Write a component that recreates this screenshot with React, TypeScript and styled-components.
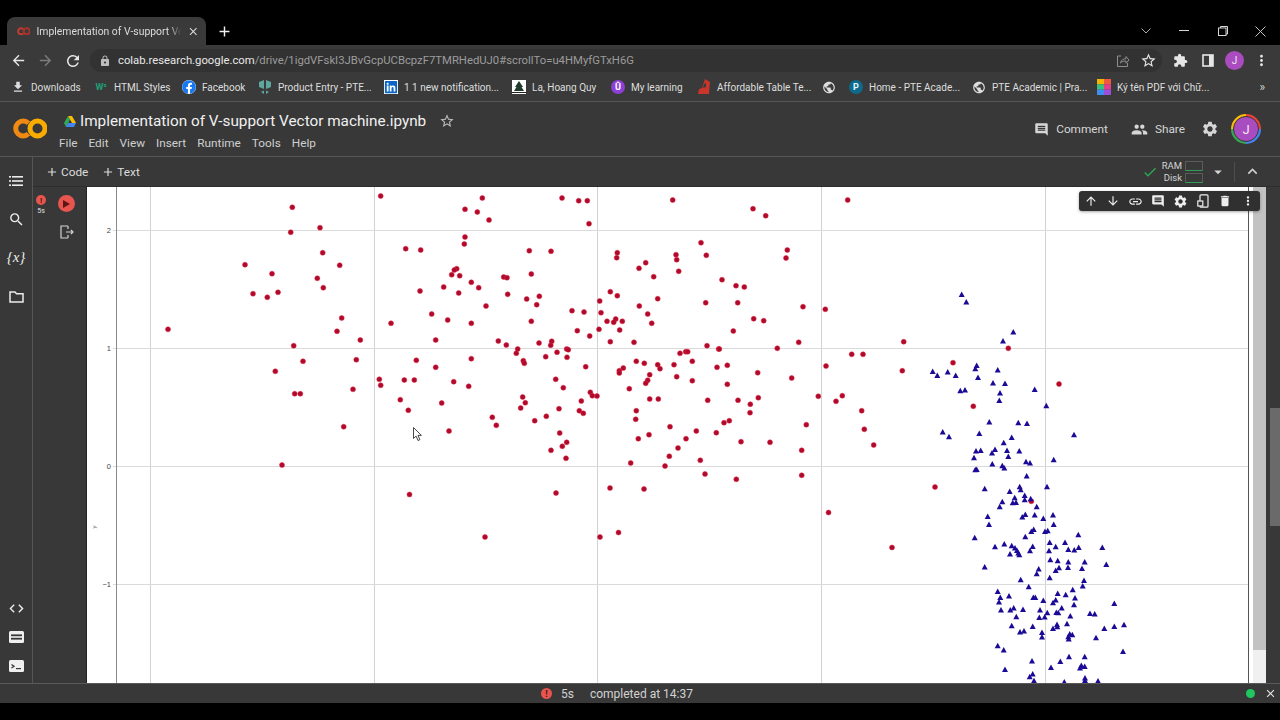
import styled, { createGlobalStyle } from 'styled-components'
import {
	MdAdd,
	MdArrowBack,
	MdArrowDownward,
	MdArrowDropDown,
	MdArrowForward,
	MdArrowUpward,
	MdCheck,
	MdClose,
	MdCode,
	MdComment,
	MdDelete,
	MdExpandLess,
	MdExtension,
	MdFileDownload,
	MdLink,
	MdLock,
	MdMoreVert,
	MdPeople,
	MdPublic,
	MdRefresh,
	MdSearch,
	MdSettings,
	MdStarBorder,
} from 'react-icons/md'
import { FaFacebook, FaLinkedin } from 'react-icons/fa'

type Point = [number, number]

const RED_POINTS: Point[] = [
	[380.7, 196], [292.3, 207.3], [320, 227.7], [290.7, 232.3], [405.7, 248.7], [420.7, 250], [322.7, 252.7], [245, 264.7],
	[339.7, 265.3], [272, 273.7], [317.3, 278.3], [323.3, 287.7], [420, 291], [253, 293.7], [267.3, 297.3], [278, 292.3],
	[431.7, 314], [341.7, 318], [391, 323.3], [168, 329.3], [337, 331.3], [360.3, 340], [435.7, 340], [293.7, 345.7],
	[303, 361.3], [416.3, 360.3], [356.3, 359.7], [435.7, 367.3], [275.3, 371.3], [379.3, 379.3], [380.7, 385.3],
	[404.3, 380], [414.3, 380], [353, 389.3], [294.7, 393.7], [300.3, 393.7], [400.3, 399.7], [408.3, 410.3], [343.7, 426.7],
	[282, 465], [409.5, 494.5], [485, 537], [556, 493], [600, 537], [618.5, 532.5], [610, 488], [644, 489], [828.5, 512.5],
	[892, 547.5], [935, 487],
	[482.3, 198], [562, 198], [578.7, 200.7], [587.3, 200.7], [672.7, 200], [465, 209.3], [477.3, 212], [489, 220],
	[589, 223.7], [465, 237], [464.3, 244], [701, 242.7], [529.3, 250.7], [551, 251.3], [617.3, 252.7], [616.7, 257.7],
	[676, 254.7], [676.7, 259.7], [706.3, 255.3], [645.7, 262.7], [639, 268.3], [678.7, 271.3], [456.7, 268.7], [454.3, 270],
	[451.7, 274.7], [459.7, 275.7], [531.3, 274], [503.7, 277], [507, 277.7], [653.7, 276.7], [471.3, 282.3], [443.7, 287],
	[478.7, 287.7], [458.7, 293], [507.7, 294.3], [539.3, 296.3], [610.3, 291.7], [617.3, 295.7], [526.7, 299], [657.7, 298.7],
	[599.7, 301], [705.7, 302.7], [536.7, 304.7], [486, 306], [639.3, 306], [572, 310.7], [584, 312], [601, 312.7], [647.7, 314],
	[447.7, 320], [531.3, 321.3], [607, 321.3], [615.7, 319], [613.7, 322.3], [622.3, 321.3], [651.7, 323.3], [471.3, 323.3],
	[577.3, 330.7], [599, 329.3], [619.7, 330], [589.7, 336], [498.3, 341], [506.3, 345], [539, 343], [551.7, 341.3],
	[550.7, 345.3], [610.3, 341.7], [634, 342.3], [707, 345.7], [718.7, 349], [517.7, 349], [516.3, 353.3], [566.7, 349],
	[568.3, 349.7], [557, 352.3], [680, 353.3], [685.7, 351.7], [687.7, 351.7], [471.3, 358.7], [545.7, 356.7], [567, 357.3],
	[523.3, 360.7], [524.3, 363.3], [636.3, 361.3], [644.3, 363.3], [657.7, 364.7], [674, 364.7], [692.3, 361.3], [660, 368.7],
	[623.3, 368], [619.3, 370.7], [619.3, 373], [717, 367.3], [585.7, 366.7], [649.7, 374.7], [676.7, 376.7], [453.7, 381.7],
	[468.7, 386.3], [555.7, 379.3], [647.7, 380.3], [645.7, 383.3], [692.3, 380.7], [563.3, 387.7], [629.3, 388.7], [590.3, 392.3],
	[592.3, 395.7], [597, 396], [522.7, 397], [649.7, 399], [658.3, 399], [581.3, 401], [707.7, 400.3], [441.7, 403], [525.3, 402.7],
	[520.7, 408], [559, 408.7], [579.3, 410.7], [583.3, 413.3], [636.3, 410.7], [492.3, 417.3], [546.3, 416.3], [635.7, 419.3],
	[534.7, 420.7], [496.3, 425.3], [670, 426.7], [449, 431], [696.3, 431], [716.3, 432.7], [649, 434.7], [559.7, 433], [638.3, 438.7],
	[686, 438.7], [566.7, 442.3], [562.3, 446.3], [678, 448], [551, 450.3], [669.3, 456.3], [566, 458.3], [700.3, 460.3], [630.7, 463],
	[665, 466], [705, 474],
	[847.7, 200], [753, 208.7], [765.7, 215.7], [787.3, 250], [786, 258], [722, 279.7], [736, 285.7], [744.3, 287], [737.7, 302.7],
	[803, 306.7], [825.3, 309.3], [753.7, 318.7], [763.7, 320.7], [733.3, 331], [798.7, 342.3], [903.7, 341.7], [719.3, 349],
	[777.3, 348.3], [851.7, 354.3], [863, 354.3], [826, 366], [727.3, 365.3], [757.7, 372.7], [902.3, 370.7], [791.7, 378],
	[727.3, 384.3], [738, 400.3], [758.3, 397.7], [750.3, 404.3], [750, 412.7], [818.3, 396.3], [836, 401.3], [842.3, 395.7],
	[861.7, 410.7], [806.3, 424.7], [864.3, 429.3], [873.7, 445], [729.3, 420.7], [724, 422.7], [741, 441.7], [770, 442.3],
	[801.7, 450.3], [736.3, 479.3], [801.7, 475.3], [1008.3, 348.3], [953, 362.7], [1059, 384], [973.3, 406.3], [1031.3, 501.3],
]

const BLUE_POINTS: Point[] = [
	[961.7, 294.7], [966.3, 302.3], [1013.3, 332.3], [1003, 341.3], [932.7, 371.7], [937.3, 375.7], [947.7, 372.3], [955.7, 375.7],
	[976.7, 365.7], [975.3, 369], [997.7, 370.3], [978, 377.7], [993, 383.3], [1005, 383.7], [960.3, 391], [965, 390.3], [1000, 393.3],
	[1034.7, 389.7], [999.3, 400.7], [1046.3, 406], [989.3, 422.3], [1018.3, 423], [1027, 423.7], [942.7, 432.3], [949, 437],
	[979.3, 433.7], [1074, 435], [1011.7, 437.7], [1003.7, 443], [995, 449.7], [976, 451.3], [980.7, 450.7], [992, 453.3], [1007, 450.7],
	[1019.3, 451.3], [974, 458], [1008.3, 456.7], [1053.7, 460], [1026, 462], [1030, 463.3], [992.3, 464.3], [1002.3, 466], [1004.3, 468.3],
	[975.3, 470], [976.7, 469.7], [1026.7, 476.3],
	[984.7, 489], [1019.7, 487], [1020.7, 490], [1047, 487], [1009.7, 491.7], [1024.7, 495.7], [1014.7, 498], [1024.7, 500], [1030.7, 499],
	[1002.3, 502], [1012.7, 503], [1016, 502.7], [999.7, 507], [1036.7, 507], [987.7, 516.7], [1025.3, 514.7], [1022.3, 517.3], [1034.7, 515.3],
	[1053, 515.3], [1043.3, 518.7], [989, 524.7], [1053.7, 524.7], [1033.7, 529.7], [1031.3, 531.7], [1045, 531.7], [1047.7, 531], [1078.3, 535],
	[1025.3, 537], [974.7, 538], [1049.7, 542.7], [1065, 542.7], [1004.3, 544.3], [995, 547], [1011.7, 546], [1015, 548.3], [1032.7, 546.7],
	[1055.7, 547], [1078.7, 547.7], [1102.3, 547.7], [1068.3, 549.7], [1074.3, 550.3], [1017, 550.7], [1049, 551], [1030, 551], [1010, 554.3],
	[1018.3, 553.3], [1019.3, 555], [1050.3, 560], [1057.7, 561], [1068.3, 562.3], [1084.7, 562.3], [1106.3, 564.7], [984.7, 567.3], [1068, 567.7],
	[1059, 568], [1038.7, 569.3], [1082, 568.7], [1055.7, 570.7], [1036.7, 574], [1049.7, 578], [1020.7, 580], [1084, 580.7], [1082.7, 586.3],
	[1028.7, 587], [997.7, 591.7], [1072.7, 590], [1057.7, 593.7], [1065.7, 595], [1009, 596.3], [1000.3, 597.7], [1033.3, 597.7], [1035.3, 597.7],
	[1075, 598.3], [1055.7, 600.3], [1043.3, 600.7], [1053, 603], [999, 602.3], [1074, 605], [1114.3, 603.7], [1013.7, 608.3], [1010.3, 610.3],
	[1001, 610.3], [1023, 609.7], [1040, 610.3], [1061.7, 608.3], [1047.3, 613], [1056.3, 612.7], [1058.3, 613], [1090, 613.7], [1094.7, 614.3],
	[1070.3, 616.3], [1016.3, 617], [1039.3, 617.7], [1044.7, 617.3], [1067, 624], [1057, 624.7], [1011.7, 626], [1032.7, 626.7], [1057.3, 627],
	[1053, 628.7], [1104.3, 628.7], [1114.3, 626.7], [1124, 625], [1024, 631.3], [1020, 632.3], [1042, 632.7], [1072.3, 635], [1069.7, 634.3],
	[1068.3, 637], [1068.7, 639.3], [1042, 637.3], [1096, 638], [997.7, 646], [1003.7, 650.3], [1123, 651.7], [1069, 657], [1084.7, 657],
	[1032, 661.3], [1060.3, 661.7], [1081.3, 665.7], [1084.7, 666.7], [1080, 668.3], [1051, 667.7], [1005, 669.7], [1032.7, 674.3], [1029.7, 677],
	[1085, 678.3], [1085, 680.7], [1098, 681.3], [1034, 681], [1064.3, 682.3],
]

const GRID_X = [150.5, 374.5, 597.5, 821.5, 1045.5]
const GRID_Y: { y: number; label: string }[] = [
	{ y: 230.5, label: '2' },
	{ y: 348.5, label: '1' },
	{ y: 466.5, label: '0' },
	{ y: 584.5, label: '−1' },
]

const MENU_ITEMS = ['File', 'Edit', 'View', 'Insert', 'Runtime', 'Tools', 'Help']

const GlobalStyle = createGlobalStyle`
	html, body {
		margin: 0;
		padding: 0;
		background: #000;
		overflow: hidden;
	}
	* {
		box-sizing: border-box;
	}
`

const Page = styled.div`
	width: 1280px;
	height: 720px;
	display: flex;
	flex-direction: column;
	background: #000;
	font-family: Roboto, 'Liberation Sans', sans-serif;
	color: #e3e3e3;
`

const TabStrip = styled.div`
	height: 45px;
	display: flex;
	align-items: flex-end;
	padding-left: 7px;
	flex-shrink: 0;
`

const Tab = styled.div`
	width: 199px;
	height: 28px;
	display: flex;
	align-items: center;
	gap: 6px;
	padding: 0 6px 0 10px;
	background: #3a3a3a;
	border-radius: 8px 8px 0 0;
	color: #dcdcdc;
`

const TabTitle = styled.span`
	width: 145px;
	font-size: 10.4px;
	white-space: nowrap;
	-webkit-mask-image: linear-gradient(90deg, #000 92%, transparent);
	mask-image: linear-gradient(90deg, #000 92%, transparent);
`

const NewTab = styled.div`
	width: 36px;
	height: 28px;
	display: flex;
	align-items: center;
	justify-content: center;
	color: #f0f0f0;
`

const WindowControls = styled.div`
	margin-left: auto;
	height: 28px;
	display: flex;
	align-items: center;
`

const WindowButton = styled.div`
	width: 38.3px;
	display: flex;
	justify-content: center;
	color: #d8d8d8;
`

const ChromeBar = styled.div`
	height: 28px;
	flex-shrink: 0;
	display: flex;
	align-items: center;
	padding: 3px 5px 0;
	background: #3a3a3a;
`

const NavButton = styled.div<{ $dim?: boolean }>`
	width: 27px;
	height: 22px;
	display: flex;
	align-items: center;
	justify-content: center;
	color: ${p => (p.$dim ? '#7c7c7c' : '#e6e6e6')};
`

const AddressPill = styled.div`
	flex: 1;
	height: 23px;
	margin: 0 5px 0 4px;
	display: flex;
	align-items: center;
	padding: 0 0 0 9px;
	background: #323232;
	border-radius: 12px;
	color: #bcbcbc;
`

const UrlText = styled.span`
	margin-left: 7px;
	font-size: 11.3px;
	color: #9c9c9c;
	white-space: nowrap;
`

const UrlHost = styled.span`
	color: #e8e8e8;
`

const PillActions = styled.div`
	margin-left: auto;
	display: flex;
	align-items: center;
	gap: 5.5px;
`

const SmallAvatar = styled.div`
	width: 19px;
	height: 19px;
	border-radius: 50%;
	background: #a94cbf;
	color: #f4e8f6;
	font-size: 10px;
	display: flex;
	align-items: center;
	justify-content: center;
`

const BookmarkBar = styled.div`
	height: 29px;
	flex-shrink: 0;
	display: flex;
	align-items: center;
	padding-left: 11px;
	background: #3a3a3a;
	border-bottom: 1px solid #555;
`

const Bookmark = styled.div<{ $width: number }>`
	width: ${p => p.$width}px;
	flex-shrink: 0;
	display: flex;
	align-items: center;
	gap: 6px;
	font-size: 10px;
	color: #dedede;
	white-space: nowrap;
`

const Favicon = styled.span<{ $bg?: string; $color?: string; $round?: boolean }>`
	width: 14px;
	height: 14px;
	flex-shrink: 0;
	display: flex;
	align-items: center;
	justify-content: center;
	font-size: 9px;
	font-weight: 700;
	background: ${p => p.$bg ?? 'transparent'};
	color: ${p => p.$color ?? '#dedede'};
	border-radius: ${p => (p.$round ? '50%' : '0')};
`

const OverflowMark = styled.span`
	margin-left: auto;
	margin-right: 15px;
	font-size: 12px;
	color: #cfcfcf;
`

const ColabHeader = styled.header`
	height: 55px;
	flex-shrink: 0;
	display: flex;
	align-items: flex-start;
	background: #383838;
	border-bottom: 1px solid #565656;
`

const LogoSlot = styled.div`
	width: 59px;
	height: 54px;
	display: flex;
	align-items: center;
	justify-content: center;
`

const TitleColumn = styled.div`
	display: flex;
	flex-direction: column;
	gap: 5px;
	padding-top: 9px;
`

const TitleRow = styled.div`
	display: flex;
	align-items: center;
	gap: 4px;
	padding-left: 5px;
	height: 20px;
`

const NotebookTitle = styled.h1`
	margin: 0;
	font-size: 15.3px;
	font-weight: 400;
	color: #f0f0f0;
	white-space: nowrap;
`

const StarSlot = styled.span`
	display: flex;
	margin-left: 9px;
	color: #bdbdbd;
`

const MenuRow = styled.nav`
	display: flex;
	gap: 11px;
	font-size: 11.8px;
	color: #cfcfcf;
`

const HeaderActions = styled.div`
	margin-left: auto;
	height: 54px;
	display: flex;
	align-items: center;
	padding-right: 19px;
	font-size: 11.8px;
	color: #d6d6d6;
`

const HeaderAction = styled.div<{ $gap: number }>`
	display: flex;
	align-items: center;
	gap: 7px;
	margin-right: ${p => p.$gap}px;
`

const AvatarRing = styled.div`
	width: 30px;
	height: 30px;
	padding: 2px;
	border-radius: 50%;
	background: conic-gradient(#ea4335 0 25%, #4285f4 25% 50%, #34a853 50% 75%, #fbbc04 75% 100%);
`

const Avatar = styled.div`
	width: 100%;
	height: 100%;
	border-radius: 50%;
	background: #a94cbf;
	border: 1px solid #383838;
	color: #f3e6f5;
	font-size: 13px;
	display: flex;
	align-items: center;
	justify-content: center;
`

const Body = styled.div`
	flex: 1;
	min-height: 0;
	display: flex;
	background: #383838;
`

const Sidebar = styled.aside`
	width: 33px;
	flex-shrink: 0;
	display: flex;
	flex-direction: column;
	justify-content: space-between;
	padding: 14px 0 7px;
	border-right: 1px solid #555;
`

const SidebarGroup = styled.div<{ $gap: number }>`
	display: flex;
	flex-direction: column;
	align-items: center;
	gap: ${p => p.$gap}px;
	color: #ececec;
`

const SideIcon = styled.div`
	width: 20px;
	height: 20px;
	display: flex;
	align-items: center;
	justify-content: center;
`

const VarsGlyph = styled.span`
	font-family: 'Liberation Serif', serif;
	font-style: italic;
	font-size: 15px;
	line-height: 16px;
	margin-top: -3px;
	color: #ececec;
`

const Workspace = styled.main`
	flex: 1;
	min-width: 0;
	display: flex;
	flex-direction: column;
`

const CodeBar = styled.div`
	height: 30px;
	flex-shrink: 0;
	display: flex;
	align-items: center;
	padding: 0 18px 0 12px;
	border-bottom: 1px solid #2d2d2d;
	font-size: 11.8px;
	color: #dcdcdc;
`

const AddButton = styled.div`
	display: flex;
	align-items: center;
	gap: 2px;
	margin-right: 13px;
`

const RuntimeStatus = styled.div`
	margin-left: auto;
	display: flex;
	align-items: center;
	color: #d4d4d4;
`

const CheckSlot = styled.span`
	display: flex;
	color: #2fa84f;
	margin-right: 4px;
`

const MeterGrid = styled.div`
	display: grid;
	grid-template-columns: auto 18px;
	column-gap: 3px;
	row-gap: 2px;
	align-items: center;
	justify-items: end;
	font-size: 9.5px;
	line-height: 10px;
`

const Meter = styled.span<{ $fill: number }>`
	width: 18px;
	height: 10px;
	display: block;
	border: 1px solid #5b5b5b;
	border-bottom: 1px solid #2f9e57;
	box-shadow: inset 0 -${p => p.$fill}px 0 #3a3a3a;
`

const DropSlot = styled.span`
	display: flex;
	margin-left: 6px;
`

const BarDivider = styled.span`
	width: 1px;
	height: 20px;
	margin: 0 8px 0 7px;
	background: #4e4e4e;
`

const CellArea = styled.section`
	flex: 1;
	min-height: 0;
	display: flex;
	position: relative;
`

const Gutter = styled.div`
	width: 54px;
	flex-shrink: 0;
	display: flex;
	padding: 8px 0 0 3px;
	border-right: 1px solid #222;
`

const ErrorColumn = styled.div`
	width: 12px;
	display: flex;
	flex-direction: column;
	align-items: center;
	gap: 2px;
	margin-left: -1px;
	font-size: 7px;
	color: #e0e0e0;
`

const ErrorDot = styled.span<{ $size: number }>`
	width: ${p => p.$size}px;
	height: ${p => p.$size}px;
	flex-shrink: 0;
	border-radius: 50%;
	background: #e8554f;
	color: #4a1614;
	font-size: ${p => p.$size - 2}px;
	font-weight: 700;
	display: flex;
	align-items: center;
	justify-content: center;
`

const RunColumn = styled.div`
	display: flex;
	flex-direction: column;
	align-items: center;
	gap: 13px;
	margin-left: 11px;
	color: #d2d2d2;
`

const RunButton = styled.div`
	width: 17px;
	height: 17px;
	border-radius: 50%;
	background: #e8554f;
	color: #5b1714;
	display: flex;
	align-items: center;
	justify-content: center;
`

const Plot = styled.div`
	width: 1166px;
	flex-shrink: 0;
	background: #fff;
`

const PlotSvg = styled.svg`
	display: block;
	width: 1166px;
	height: 496px;
`

const CellScrollbar = styled.div`
	width: 13px;
	flex-shrink: 0;
	background: #f0f0f0;
`

const CellScrollThumb = styled.div`
	height: 463px;
	background: #c2c2c2;
`

const PageScrollbar = styled.div`
	flex: 1;
	padding: 221px 0 0 4px;
	background: #383838;
`

const PageScrollThumb = styled.div`
	height: 118px;
	background: #6a6a6a;
`

const CellToolbar = styled.div`
	position: absolute;
	top: 4px;
	right: 20px;
	height: 20px;
	display: flex;
	align-items: center;
	padding: 0 1px;
	background: #303030;
	border-radius: 3px;
	box-shadow: 0 1px 3px rgba(0, 0, 0, 0.35);
	color: #eee;
`

const CellTool = styled.span`
	width: 22.4px;
	display: flex;
	justify-content: center;
`

const StatusBar = styled.footer`
	height: 20px;
	flex-shrink: 0;
	display: flex;
	align-items: center;
	padding: 0 3px 0 541px;
	background: #383838;
	border-top: 1px solid #595959;
	font-size: 12px;
	color: #d2d2d2;
`

const StatusTime = styled.span`
	margin: 0 16px 0 9px;
`

const StatusRight = styled.div`
	margin-left: auto;
	display: flex;
	align-items: center;
	gap: 9px;
	color: #e8e8e8;
`

const GreenDot = styled.span`
	width: 9px;
	height: 9px;
	border-radius: 50%;
	background: #1fc75f;
`

const BlackFooter = styled.div`
	height: 17px;
	flex-shrink: 0;
`

function ColabLogo({ size, c, o }: { size: number; c: string; o: string }) {
	return (
		<svg width={size} height={size * 0.62} viewBox='0 0 34 21' fill='none'>
			<circle cx='24.5' cy='10.5' r='7.5' stroke={o} strokeWidth='5' />
			<path d='M15.5 5.2A7.5 7.5 0 1 0 15.5 15.8' stroke={c} strokeWidth='5' />
		</svg>
	)
}

function DriveIcon() {
	return (
		<svg width='12' height='11' viewBox='0 0 12 11'>
			<polygon points='4,0 8,0 12,7 8,7' fill='#fbbc04' />
			<polygon points='4,0 6,3.5 2,11 0,7' fill='#34a853' />
			<polygon points='3.8,7 12,7 10,11 2,11' fill='#4285f4' />
		</svg>
	)
}

function OutputIcon() {
	return (
		<svg width='15' height='14' viewBox='0 0 15 14' fill='none' stroke='currentColor' strokeWidth='1.2'>
			<path d='M9 1H2v12h7M9 1v3M9 10v3' />
			<path d='M7 7h7M12 5l2 2-2 2' />
		</svg>
	)
}

function ListIcon() {
	return (
		<svg width='14' height='12' viewBox='0 0 14 12' fill='currentColor'>
			<rect x='0' y='1' width='2' height='1.6' />
			<rect x='3' y='1' width='11' height='1.6' />
			<rect x='0' y='5.2' width='2' height='1.6' />
			<rect x='3' y='5.2' width='11' height='1.6' />
			<rect x='0' y='9.4' width='2' height='1.6' />
			<rect x='3' y='9.4' width='11' height='1.6' />
		</svg>
	)
}

function FolderIcon() {
	return (
		<svg width='15' height='12' viewBox='0 0 15 12' fill='none' stroke='currentColor' strokeWidth='1.5'>
			<path d='M1 1h5l1.5 1.7H14V11H1z' />
		</svg>
	)
}

function PaletteIcon() {
	return (
		<svg width='15' height='12' viewBox='0 0 15 12'>
			<rect width='15' height='12' rx='1.5' fill='#efefef' />
			<rect x='2' y='3.4' width='11' height='1.8' fill='#383838' />
			<rect x='2' y='6.8' width='11' height='1.8' fill='#383838' />
		</svg>
	)
}

function TerminalIcon() {
	return (
		<svg width='15' height='12' viewBox='0 0 15 12'>
			<rect width='15' height='12' rx='1.5' fill='#efefef' />
			<path d='M2.5 4.5L5 6.3 2.5 8' fill='none' stroke='#383838' strokeWidth='1.3' />
			<rect x='7' y='8' width='5' height='1.2' fill='#383838' />
		</svg>
	)
}

function SidePanelIcon() {
	return (
		<svg width='12' height='13' viewBox='0 0 12 13' fill='none'>
			<rect x='1' y='1' width='10' height='11' stroke='currentColor' strokeWidth='1.6' />
			<rect x='7' y='1' width='4' height='11' fill='currentColor' />
		</svg>
	)
}

function MirrorIcon() {
	return (
		<svg width='12' height='14' viewBox='0 0 12 14' fill='none' stroke='currentColor' strokeWidth='1.2'>
			<rect x='3' y='0.8' width='8' height='12.4' rx='1' />
			<rect x='0.8' y='7' width='5' height='5' fill='#303030' />
		</svg>
	)
}

function TreeFavicon() {
	return (
		<svg width='14' height='14' viewBox='0 0 14 14'>
			<rect width='14' height='14' fill='#fff' />
			<path d='M7 1L11 7H9.5L12 11H2L4.5 7H3z' fill='#1f3a2c' />
			<rect y='12' width='14' height='1' fill='#222' />
		</svg>
	)
}

function ProductFavicon() {
	return (
		<svg width='14' height='16' viewBox='0 0 14 16' fill='#5fa6a0'>
			<path d='M6 1v9L1 8V3z' />
			<path d='M8 1v9l5-2V3z' />
			<path d='M6 11.5v3.5L3 13zM8 11.5v3.5l3-2z' />
		</svg>
	)
}

function TableFavicon() {
	return (
		<svg width='14' height='16' viewBox='0 0 14 16'>
			<path d='M8 0l5 3-1 12H1l1-5 3-1z' fill='#c8352a' />
			<path d='M7 5l2-1v4l-3 1z' fill='#3a3a3a' />
		</svg>
	)
}

function RainbowFavicon() {
	return (
		<svg width='14' height='16' viewBox='0 0 14 16'>
			<rect width='7' height='5.4' fill='#f4b400' />
			<rect x='7' width='7' height='5.4' fill='#ef5b3c' />
			<rect y='5.3' width='7' height='5.4' fill='#3ac27a' />
			<rect x='7' y='5.3' width='7' height='5.4' fill='#e53f8c' />
			<rect y='10.6' width='7' height='5.4' fill='#3e8df0' />
			<rect x='7' y='10.6' width='7' height='5.4' fill='#9a4fd8' />
		</svg>
	)
}

function ScatterPlot() {
	return (
		<PlotSvg viewBox='87 187 1166 496'>
			{GRID_X.map(x => (
				<line key={x} x1={x} x2={x} y1={187} y2={683} stroke='#d2d2d2' strokeWidth='1' />
			))}
			{GRID_Y.map(({ y, label }) => (
				<g key={y}>
					<line x1={113} x2={1248} y1={y} y2={y} stroke='#dadada' strokeWidth='1' />
					<text x={111} y={y + 2.5} textAnchor='end' fontSize='7.5' fontFamily='Liberation Sans, sans-serif' fill='#444'>
						{label}
					</text>
				</g>
			))}
			<line x1={116.5} x2={116.5} y1={187} y2={683} stroke='#8a8a8a' strokeWidth='1' />
			<line x1={1248.5} x2={1248.5} y1={187} y2={683} stroke='#555' strokeWidth='1' />
			<text x={96} y={527} transform='rotate(-90 96 527)' textAnchor='middle' fontSize='6' fontFamily='Liberation Sans, sans-serif' fill='#555'>
				y
			</text>
			{RED_POINTS.map(([x, y], i) => (
				<circle key={i} cx={x} cy={y} r={2.5} fill='#ad0a2e' stroke='#e2263c' strokeWidth='0.5' />
			))}
			{BLUE_POINTS.map(([x, y], i) => (
				<polygon
					key={i}
					points={`${x},${y - 3.2} ${x + 3},${y + 2.2} ${x - 3},${y + 2.2}`}
					fill='#1a0a96'
				/>
			))}
			<path
				d='M413.5 427.5v11l2.6-2.4 1.9 4.4 1.9-.8-1.9-4.3h3.4z'
				fill='#fff'
				stroke='#333'
				strokeWidth='0.9'
			/>
		</PlotSvg>
	)
}

function App() {
	return (
		<Page>
			<GlobalStyle />
			<TabStrip>
				<Tab>
					<ColabLogo size={14} c='#c23b32' o='#a8322b' />
					<TabTitle>Implementation of V-support Vec</TabTitle>
					<MdClose size={13} />
				</Tab>
				<NewTab>
					<MdAdd size={17} />
				</NewTab>
				<WindowControls>
					<WindowButton>
						<svg width='10' height='6' viewBox='0 0 10 6' fill='none' stroke='currentColor' strokeWidth='0.8'>
							<path d='M0.5 0.5L5 5l4.5-4.5' />
						</svg>
					</WindowButton>
					<WindowButton>
						<svg width='10' height='2' viewBox='0 0 10 2'>
							<rect width='10' height='1' fill='currentColor' />
						</svg>
					</WindowButton>
					<WindowButton>
						<svg width='10' height='10' viewBox='0 0 10 10' fill='none' stroke='currentColor' strokeWidth='1'>
							<rect x='0.5' y='2' width='7.5' height='7.5' />
							<path d='M2.5 2V.5h7V8H8' />
						</svg>
					</WindowButton>
					<WindowButton>
						<svg width='11' height='11' viewBox='0 0 11 11' fill='none' stroke='currentColor' strokeWidth='0.9'>
							<path d='M.5.5l10 10M10.5.5l-10 10' />
						</svg>
					</WindowButton>
				</WindowControls>
			</TabStrip>

			<ChromeBar>
				<NavButton>
					<MdArrowBack size={17} />
				</NavButton>
				<NavButton $dim>
					<MdArrowForward size={17} />
				</NavButton>
				<NavButton>
					<MdRefresh size={18} />
				</NavButton>
				<AddressPill>
					<MdLock size={12} />
					<UrlText>
						<UrlHost>colab.research.google.com</UrlHost>/drive/1igdVFskI3JBvGcpUCBcpzF7TMRHedUJ0#scrollTo=u4HMyfGTxH6G
					</UrlText>
					<PillActions>
						<svg width='14' height='14' viewBox='0 0 14 14' fill='none' stroke='#8e8e8e' strokeWidth='1'>
							<path d='M5 2H1.5v10.5h10V9' />
							<path d='M4.5 9c.5-3 3-4.3 5.5-4.3V2.5L13 6l-3 3.2V7C7.5 7 5.6 7.6 4.5 9z' />
						</svg>
						<NavButton>
							<MdStarBorder size={17} />
						</NavButton>
					</PillActions>
				</AddressPill>
				<NavButton>
					<MdExtension size={15} />
				</NavButton>
				<NavButton>
					<SidePanelIcon />
				</NavButton>
				<NavButton>
					<SmallAvatar>J</SmallAvatar>
				</NavButton>
				<NavButton>
					<MdMoreVert size={17} />
				</NavButton>
			</ChromeBar>

			<BookmarkBar>
				<Bookmark $width={83}>
					<Favicon>
						<MdFileDownload size={14} />
					</Favicon>
					Downloads
				</Bookmark>
				<Bookmark $width={88}>
					<Favicon $color='#1f9e77'>W³</Favicon>
					HTML Styles
				</Bookmark>
				<Bookmark $width={76}>
					<Favicon $color='#1877f2' $bg='#fff' $round>
						<FaFacebook size={14} />
					</Favicon>
					Facebook
				</Bookmark>
				<Bookmark $width={126}>
					<Favicon>
						<ProductFavicon />
					</Favicon>
					Product Entry - PTE...
				</Bookmark>
				<Bookmark $width={128}>
					<Favicon $color='#0a66c2' $bg='#fff'>
						<FaLinkedin size={14} />
					</Favicon>
					1 1 new notification...
				</Bookmark>
				<Bookmark $width={99}>
					<Favicon>
						<TreeFavicon />
					</Favicon>
					La, Hoang Quy
				</Bookmark>
				<Bookmark $width={86}>
					<Favicon $bg='#8e3fd6' $color='#fff' $round>
						Û
					</Favicon>
					My learning
				</Bookmark>
				<Bookmark $width={125}>
					<Favicon>
						<TableFavicon />
					</Favicon>
					Affordable Table Te...
				</Bookmark>
				<Bookmark $width={27}>
					<Favicon>
						<MdPublic size={15} />
					</Favicon>
				</Bookmark>
				<Bookmark $width={123}>
					<Favicon $bg='#0d6a8c' $color='#e8f6fa' $round>
						P
					</Favicon>
					Home - PTE Acade...
				</Bookmark>
				<Bookmark $width={125}>
					<Favicon>
						<MdPublic size={15} />
					</Favicon>
					PTE Academic | Pra...
				</Bookmark>
				<Bookmark $width={112}>
					<Favicon>
						<RainbowFavicon />
					</Favicon>
					Ký tên PDF với Chữ...
				</Bookmark>
				<OverflowMark>»</OverflowMark>
			</BookmarkBar>

			<ColabHeader>
				<LogoSlot>
					<ColabLogo size={34} c='#f08a12' o='#f9ab00' />
				</LogoSlot>
				<TitleColumn>
					<TitleRow>
						<DriveIcon />
						<NotebookTitle>Implementation of V-support Vector machine.ipynb</NotebookTitle>
						<StarSlot>
							<MdStarBorder size={16} />
						</StarSlot>
					</TitleRow>
					<MenuRow>
						{MENU_ITEMS.map(item => (
							<span key={item}>{item}</span>
						))}
					</MenuRow>
				</TitleColumn>
				<HeaderActions>
					<HeaderAction $gap={23}>
						<MdComment size={15} />
						Comment
					</HeaderAction>
					<HeaderAction $gap={16}>
						<MdPeople size={17} />
						Share
					</HeaderAction>
					<HeaderAction $gap={12}>
						<MdSettings size={18} />
					</HeaderAction>
					<AvatarRing>
						<Avatar>J</Avatar>
					</AvatarRing>
				</HeaderActions>
			</ColabHeader>

			<Body>
				<Sidebar>
					<SidebarGroup $gap={18.5}>
						<SideIcon>
							<ListIcon />
						</SideIcon>
						<SideIcon>
							<MdSearch size={17} />
						</SideIcon>
						<SideIcon>
							<VarsGlyph>{'{x}'}</VarsGlyph>
						</SideIcon>
						<SideIcon>
							<FolderIcon />
						</SideIcon>
					</SidebarGroup>
					<SidebarGroup $gap={9}>
						<SideIcon>
							<MdCode size={17} />
						</SideIcon>
						<SideIcon>
							<PaletteIcon />
						</SideIcon>
						<SideIcon>
							<TerminalIcon />
						</SideIcon>
					</SidebarGroup>
				</Sidebar>

				<Workspace>
					<CodeBar>
						<AddButton>
							<MdAdd size={14} /> Code
						</AddButton>
						<AddButton>
							<MdAdd size={14} /> Text
						</AddButton>
						<RuntimeStatus>
							<CheckSlot>
								<MdCheck size={16} />
							</CheckSlot>
							<MeterGrid>
								<span>RAM</span>
								<Meter $fill={1} />
								<span>Disk</span>
								<Meter $fill={2} />
							</MeterGrid>
							<DropSlot>
								<MdArrowDropDown size={18} />
							</DropSlot>
							<BarDivider />
							<MdExpandLess size={19} />
						</RuntimeStatus>
					</CodeBar>

					<CellArea>
						<Gutter>
							<ErrorColumn>
								<ErrorDot $size={10}>!</ErrorDot>
								5s
							</ErrorColumn>
							<RunColumn>
								<RunButton>
									<svg width='7' height='8' viewBox='0 0 7 8'>
										<polygon points='0,0 7,4 0,8' fill='currentColor' />
									</svg>
								</RunButton>
								<OutputIcon />
							</RunColumn>
						</Gutter>
						<Plot>
							<ScatterPlot />
						</Plot>
						<CellScrollbar>
							<CellScrollThumb />
						</CellScrollbar>
						<PageScrollbar>
							<PageScrollThumb />
						</PageScrollbar>
						<CellToolbar>
							<CellTool>
								<MdArrowUpward size={14} />
							</CellTool>
							<CellTool>
								<MdArrowDownward size={14} />
							</CellTool>
							<CellTool>
								<MdLink size={15} />
							</CellTool>
							<CellTool>
								<MdComment size={14} />
							</CellTool>
							<CellTool>
								<MdSettings size={15} />
							</CellTool>
							<CellTool>
								<MirrorIcon />
							</CellTool>
							<CellTool>
								<MdDelete size={14} />
							</CellTool>
							<CellTool>
								<MdMoreVert size={14} />
							</CellTool>
						</CellToolbar>
					</CellArea>
				</Workspace>
			</Body>

			<StatusBar>
				<ErrorDot $size={11}>!</ErrorDot>
				<StatusTime>5s</StatusTime>
				completed at 14:37
				<StatusRight>
					<GreenDot />
					<MdClose size={13} />
				</StatusRight>
			</StatusBar>
			<BlackFooter />
		</Page>
	)
}

export default App
